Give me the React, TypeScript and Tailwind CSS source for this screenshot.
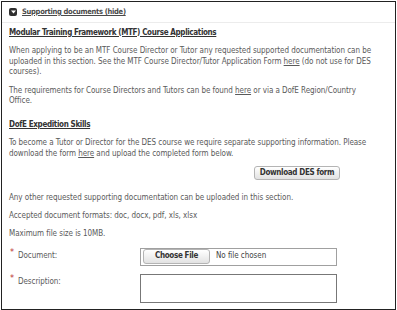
const bold = "font-bold tracking-[-0.35px]";

export default function App() {
  return (
    <div className="w-[397px] h-[310px] bg-white pt-[1px] pl-[1px]">
      <div
        className="h-[309px] w-[395px] border border-[#222] text-[#5a5a5a] text-[8px] leading-[10.5px]"
        style={{ fontFamily: '"DejaVu Sans Condensed", "Liberation Sans", sans-serif' }}
      >
        {/* section header */}
        <div className="flex items-center gap-[5px] px-[7px] pt-[5px] pb-[4px] border-b border-[#ececec]">
          <span className="flex h-[8px] w-[8px] items-center justify-center rounded-[2px] bg-[#2f2f2f]">
            <svg width="5" height="4" viewBox="0 0 5 4">
              <path d="M0 0.5 L5 0.5 L2.5 3.5 Z" fill="#fff" />
            </svg>
          </span>
          <a className="font-bold text-[7.5px] tracking-[-0.3px] text-[#4a4a4a] underline">
            Supporting documents (hide)
          </a>
        </div>

        <div className="px-[7px] whitespace-nowrap tracking-[-0.06px]">
          <h3 className={`mt-[5px] ${bold} text-[#333] underline`}>
            Modular Training Framework (MTF) Course Applications
          </h3>
          <p className="mt-[8px]">
            When applying to be an MTF Course Director or Tutor any requested supported documentation can be
            <br />
            uploaded in this section. See the MTF Course Director/Tutor Application Form{" "}
            <a className="underline">here</a> (do not use for DES
            <br />
            courses).
          </p>
          <p className="mt-[8px]">
            The requirements for Course Directors and Tutors can be found <a className="underline">here</a> or via
            a DofE Region/Country
            <br />
            Office.
          </p>

          <h3 className={`mt-[13px] ${bold} text-[#333] underline`}>DofE Expedition Skills</h3>
          <p className="mt-[8px]">
            To become a Tutor or Director for the DES course we require separate supporting information. Please
            <br />
            download the form <a className="underline">here</a> and upload the completed form below.
          </p>
          <div className="flex justify-end pr-[48px] mt-[7px]">
            <button
              className={`flex h-[14px] w-[86px] items-center justify-center rounded-[3px] border border-[#b4b4b4] bg-gradient-to-b from-white to-[#e2e2e2] ${bold} text-[#333]`}
            >
              Download DES form
            </button>
          </div>
          <p className="mt-[13px]">Any other requested supporting documentation can be uploaded in this section.</p>
          <p className="mt-[7px]">Accepted document formats: doc, docx, pdf, xls, xlsx</p>
          <p className="mt-[8px]">Maximum file size is 10MB.</p>

          <div className="mt-[8px] flex">
            <div className="w-[131px] flex">
              <span className="pl-[1px] text-[#b33] text-[9px] leading-[8px]">*</span>
              <span className="ml-[4px] mt-[3px]">Document:</span>
            </div>
            <div className="flex h-[18px] w-[197px] items-center border border-[#a0a0a0] px-[2px]">
              <span
                className={`flex h-[15px] w-[67px] items-center justify-center rounded-[3px] border border-[#b4b4b4] bg-gradient-to-b from-white to-[#e2e2e2] ${bold} text-[#333]`}
              >
                Choose File
              </span>
              <span className="ml-[6px] text-[#444]">No file chosen</span>
            </div>
          </div>

          <div className="mt-[8px] flex">
            <div className="w-[131px] flex">
              <span className="pl-[1px] text-[#b33] text-[9px] leading-[8px]">*</span>
              <span className="ml-[4px] mt-[3px]">Description:</span>
            </div>
            <div className="h-[29px] w-[197px] border border-[#777]" />
          </div>
        </div>
      </div>
    </div>
  );
}
